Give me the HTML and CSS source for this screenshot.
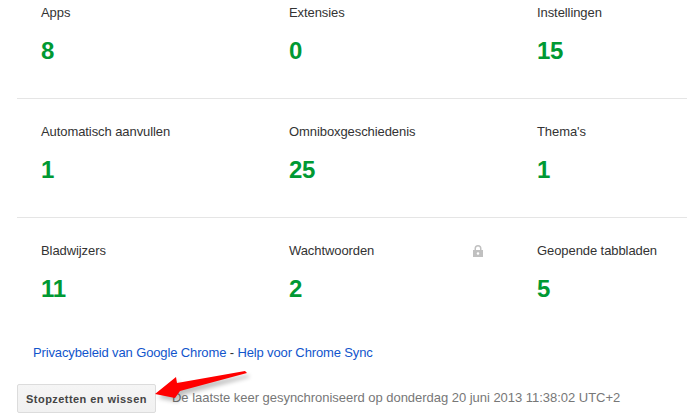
FILE: index.html
```html
<!DOCTYPE html>
<html>
<head>
  <title>Chrome Sync</title>
  <link rel="stylesheet" href="styles.css">
</head>
<body>

  <!-- Sync stats -->
  <div class="stats">
    <div class="row first">
      <div class="tile"><div class="label">Apps</div><div class="count">8</div></div>
      <div class="tile"><div class="label">Extensies</div><div class="count">0</div></div>
      <div class="tile"><div class="label">Instellingen</div><div class="count">15</div></div>
    </div>
    <div class="row">
      <div class="tile"><div class="label">Automatisch aanvullen</div><div class="count">1</div></div>
      <div class="tile"><div class="label">Omniboxgeschiedenis</div><div class="count">25</div></div>
      <div class="tile"><div class="label">Thema's</div><div class="count">1</div></div>
    </div>
    <div class="row last">
      <div class="tile"><div class="label">Bladwijzers</div><div class="count">11</div></div>
      <div class="tile">
        <div class="label">Wachtwoorden
          <svg class="lock" width="10" height="12" viewBox="0 0 10 12">
            <path fill="#c0c0c0" fill-rule="evenodd" d="M1.5 5V3.5a3.5 3.5 0 0 1 7 0V5H10v7H0V5zM3 5h4V3.5a2 2 0 0 0-4 0zM5 7.2a1.3 1.3 0 1 0 0 2.6a1.3 1.3 0 0 0 0-2.6z"/>
          </svg>
        </div>
        <div class="count">2</div>
      </div>
      <div class="tile"><div class="label">Geopende tabbladen</div><div class="count">5</div></div>
    </div>
  </div>

  <div class="links">
    <a href="#">Privacybeleid van Google Chrome</a> - <a href="#">Help voor Chrome Sync</a>
  </div>

  <div class="footer">
    <button>Stopzetten en wissen</button>
    <span class="synced">De laatste keer gesynchroniseerd op donderdag 20 juni 2013 11:38:02 UTC+2</span>
  </div>

  <!-- Annotation arrow -->
  <svg class="arrow" width="110" height="40" viewBox="0 0 110 40">
    <defs>
      <filter id="soft" x="-20%" y="-40%" width="140%" height="180%">
        <feGaussianBlur stdDeviation="2"/>
      </filter>
    </defs>
    <path d="M6 24 L27 7 L28 13 L96 1 L98 3 L31 21 L26 28 Z" fill="#000" opacity=".25" filter="url(#soft)" transform="translate(3 4)"/>
    <path d="M6 24 L27 7 L28 13 L96 1 L98 3 L31 21 L26 28 Z" fill="#f00"/>
  </svg>

</body>
</html>
```

FILE: styles.css
```css
body {
  margin: 0;
  font-family: "Liberation Sans", Arial, sans-serif;
  font-size: 13px;
  color: #333;
  background: #fff;
  overflow: hidden;
}

.stats {
  margin-left: 17px;
}

.row {
  display: grid;
  grid-template-columns: 248px 248px 1fr;
  padding-top: 24px;
  padding-bottom: 33px;
  border-bottom: 1px solid #e5e5e5;
}

.row.first {
  padding-top: 4px;
}

.row.last {
  border-bottom: none;
  padding-bottom: 0;
}

.tile {
  padding: 0 30px 0 24px;
}

.tile:last-child {
  padding-right: 0;
}

.label {
  display: flex;
  justify-content: space-between;
  align-items: center;
  padding-top: 1px;
  line-height: 16px;
  letter-spacing: -.08px;
  white-space: nowrap;
}

.count {
  margin-top: 16px;
  font-size: 24px;
  font-weight: bold;
  line-height: 28px;
  letter-spacing: -.3px;
  color: #093;
}

.links {
  margin: 42px 0 0 33px;
  line-height: 16px;
  letter-spacing: -.13px;
  color: #333;
}

.links a {
  color: #15c;
  text-decoration: none;
}

.footer {
  display: flex;
  align-items: center;
  gap: 16px;
  margin: 23px 0 0 17px;
}

button {
  height: 29px;
  width: 139px;
  padding: 0;
  font-family: "Liberation Sans", Arial, sans-serif;
  font-size: 11px;
  font-weight: bold;
  letter-spacing: .45px;
  color: #444;
  background: linear-gradient(#f5f5f5, #f1f1f1);
  border: 1px solid #dcdcdc;
  border-radius: 2px;
}

.synced {
  position: relative;
  top: -1px;
  color: #777;
  letter-spacing: -.03px;
  white-space: nowrap;
}

.arrow {
  position: absolute;
  left: 149px;
  top: 370px;
}
```
